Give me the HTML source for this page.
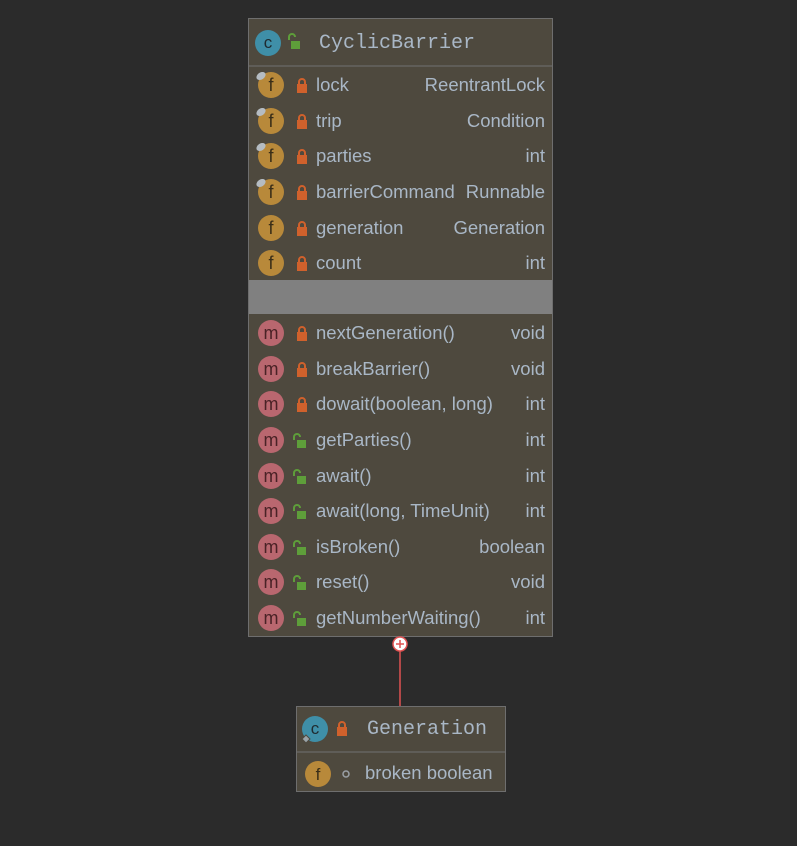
<!DOCTYPE html>
<html><head><meta charset="utf-8"><style>
body{margin:0;background:#2b2b2b;width:797px;height:846px;position:relative;overflow:hidden;font-family:"Liberation Sans",sans-serif;}
.box{position:absolute;background:#4e493e;border:1px solid #6e6e6e;box-sizing:border-box;}
.hdr{position:absolute;left:0;right:0;border-bottom:2px solid #5f5d58;}
.r{position:absolute;left:0;right:0;height:35px;color:#a9b7c6;font-size:18.5px;}
.r svg{position:absolute;top:5px;left:8px}
.r .n{position:absolute;left:68px;top:7px;white-space:nowrap}
.r .t{position:absolute;right:8px;top:7px;white-space:nowrap}
.title{position:absolute;font-family:"Liberation Mono",monospace;font-size:20px;color:#a9b7c6;}
</style></head><body>

<div class="box" style="left:248px;top:18px;width:305px;height:619px;">
 <div class="hdr" style="top:0;height:46px;">
  <svg style="position:absolute;left:5px;top:10px" width="48" height="28">
   <circle cx="14" cy="14" r="13" fill="#3f8fa8"/>
   <text x="14" y="19" text-anchor="middle" font-family="Liberation Sans" font-size="17" fill="#1f2b30">c</text>
   <path d="M35 11 v-3 a3 3 0 0 1 6 0" fill="none" stroke="#5e9e3a" stroke-width="2"/>
   <rect x="37" y="12" width="9" height="8" fill="#5e9e3a"/>
  </svg>
  <div class="title" style="left:70px;top:13px;">CyclicBarrier</div>
 </div>
 <div style="position:absolute;left:0;right:0;top:261px;height:34px;background:#808080"></div>
</div>

<div id="rows"></div>

<svg style="position:absolute;left:0;top:0" width="797" height="846">
 <line x1="400" y1="651" x2="400" y2="706" stroke="#e05252" stroke-width="1.5"/>
 <circle cx="400" cy="644" r="7" fill="#fff" stroke="#e05252" stroke-width="1.5"/>
 <path d="M396 644h8M400 640v8" stroke="#e05252" stroke-width="1.5"/>
</svg>

<div class="box" style="left:296px;top:706px;width:210px;height:86px;">
 <div class="hdr" style="top:0;height:44px;">
  <svg style="position:absolute;left:3px;top:8px" width="60" height="30">
   <circle cx="15" cy="14" r="13" fill="#3f8fa8"/>
   <text x="15" y="19" text-anchor="middle" font-family="Liberation Sans" font-size="17" fill="#1f2b30">c</text>
   <path d="M6 20 l4 4 -4 4 -4 -4z" fill="#9aa3a8" stroke="#4e493e" stroke-width="1"/>
   <path d="M39 12 v-2 a3 3 0 0 1 6 0 v2" fill="none" stroke="#d0612c" stroke-width="2"/>
   <rect x="37" y="12" width="10" height="9" fill="#d0612c"/>
  </svg>
  <div class="title" style="left:70px;top:11px;">Generation</div>
 </div>
 <div class="r" style="top:48px;">
  <svg width="50" height="28"><circle cx="13" cy="14" r="13" fill="#b8893a"/><text x="13" y="20" text-anchor="middle" font-family="Liberation Sans" font-size="17" fill="#3a2e18">f</text><circle cx="41" cy="14" r="3" fill="none" stroke="#9aa0a6" stroke-width="1.5"/></svg>
  <div class="n" style="left:68px">broken boolean</div>
 </div>
</div>

<script>
var rows=[
['f','c','lock','ReentrantLock',84,1],['f','c','trip','Condition',120,1],['f','c','parties','int',155,1],['f','c','barrierCommand','Runnable',191,1],['f','c','generation','Generation',227,0],['f','c','count','int',262,0],
['m','c','nextGeneration()','void',332],['m','c','breakBarrier()','void',368],['m','c','dowait(boolean, long)','int',403],['m','o','getParties()','int',439],['m','o','await()','int',475],['m','o','await(long, TimeUnit)','int',510],['m','o','isBroken()','boolean',546],['m','o','reset()','void',581],['m','o','getNumberWaiting()','int',617]];
var h='';
rows.forEach(function(r){
 var col=r[0]=='f'?'#b8893a':'#b9676f', tc=r[0]=='f'?'#3a2e18':'#4a2226';
 var lock=r[1]=='c'?'<path d="M43 12 v-2 a3 3 0 0 1 6 0 v2" fill="none" stroke="#d0612c" stroke-width="2"/><rect x="41" y="12" width="10" height="9" fill="#d0612c"/>':'<path d="M38 13 v-3 a3 3 0 0 1 6 0" fill="none" stroke="#5e9e3a" stroke-width="2"/><rect x="41" y="13" width="9" height="8" fill="#5e9e3a"/>';
 var fin=r[5]?'<ellipse cx="5" cy="4" rx="5" ry="3.5" fill="#b5bcc2" transform="rotate(-35 5 4)"/>':'';
 h+='<div class="r" style="left:248px;width:305px;top:'+(r[4]-17)+'px"><svg width="56" height="28"><circle cx="15" cy="13" r="13" fill="'+col+'"/>'+fin+'<text x="15" y="19" text-anchor="middle" font-family="Liberation Sans" font-size="18" fill="'+tc+'">'+r[0]+'</text>'+lock+'</svg><div class="n">'+r[2]+'</div><div class="t">'+r[3]+'</div></div>';
});
document.getElementById('rows').innerHTML=h;
</script>
</body></html>
